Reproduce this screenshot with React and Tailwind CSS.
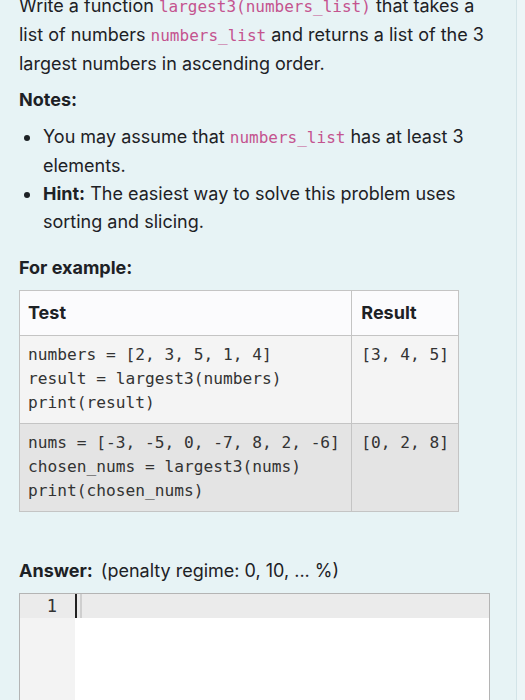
import React from "react";

function Code({ children }) {
  return (
    <code className="font-['DejaVu_Sans_Mono',monospace] text-[16px] text-[#c4548f]">{children}</code>
  );
}

function Bullet({ children }) {
  return (
    <li className="flex">
      <span className="w-[24px] shrink-0 flex justify-start pl-[5px] pt-[12px]">
        <span className="block w-[6px] h-[6px] rounded-full bg-[#1d2125]" />
      </span>
      <span>{children}</span>
    </li>
  );
}

export default function App() {
  const mono = "font-['DejaVu_Sans_Mono',monospace] text-[16.2px] leading-[24px] text-[#333]";
  return (
    <div className="w-[525px] h-[700px] overflow-hidden bg-[#e7f3f5] flex text-[#1d2125] font-['Inter','Liberation_Sans',sans-serif] text-[18px] leading-[28px]">
      <div className="w-[517px] border-r border-[#d3e4e8] pl-[19px] pr-[20px] -mt-2 shrink-0">
        <p>
          Write a function <Code>largest3(numbers_list)</Code> that takes a list of numbers{" "}
          <Code>numbers_list</Code> and returns a list of the 3 largest numbers in ascending order.
        </p>
        <p className="mt-[8px] font-bold">Notes:</p>
        <ul className="mt-[9px]">
          <Bullet>
            You may assume that <Code>numbers_list</Code> has at least 3 elements.
          </Bullet>
          <Bullet>
            <b>Hint:</b> The easiest way to solve this problem uses sorting and slicing.
          </Bullet>
        </ul>
        <p className="mt-[18px] font-bold">For example:</p>
        <table className="mt-[8px] w-[440px] border-collapse border border-[#c4c4c4]">
          <thead>
            <tr className="bg-[#fbfbfd] h-[45px]">
              <th className="text-left font-bold px-[8px] border border-[#c4c4c4] w-[333px]">Test</th>
              <th className="text-left font-bold px-[9px] border border-[#c4c4c4]">Result</th>
            </tr>
          </thead>
          <tbody>
            <tr className="bg-[#f4f4f4] h-[88px]">
              <td className={"align-top px-[8px] pt-[7px] pb-[8px] border border-[#c4c4c4] whitespace-pre " + mono}>
                {"numbers = [2, 3, 5, 1, 4]\nresult = largest3(numbers)\nprint(result)"}
              </td>
              <td className={"align-top px-[9px] pt-[7px] border border-[#c4c4c4] whitespace-pre " + mono}>
                {"[3, 4, 5]"}
              </td>
            </tr>
            <tr className="bg-[#e4e4e4] h-[88px]">
              <td className={"align-top px-[8px] pt-[7px] pb-[8px] border border-[#c4c4c4] whitespace-pre " + mono}>
                {"nums = [-3, -5, 0, -7, 8, 2, -6]\nchosen_nums = largest3(nums)\nprint(chosen_nums)"}
              </td>
              <td className={"align-top px-[9px] pt-[7px] border border-[#c4c4c4] whitespace-pre " + mono}>
                {"[0, 2, 8]"}
              </td>
            </tr>
          </tbody>
        </table>
        <p className="mt-[45px]">
          <b>Answer:</b>
          <span className="ml-[8px]">(penalty regime: 0, 10, ... %)</span>
        </p>
        <div className="mt-[8px] w-[471px] h-[200px] border border-[#b4b4b4] bg-white flex">
          <div className="w-[55px] bg-[#f3f3f3] flex flex-col">
            <div className="h-[24px] bg-[#ebebeb] text-right pr-[18px] font-['DejaVu_Sans_Mono',monospace] text-[17px] leading-[24px] text-[#333]">
              1
            </div>
          </div>
          <div className="flex-1 flex flex-col">
            <div className="h-[24px] bg-[#ebebeb] flex items-stretch">
              <div className="w-[2px] bg-[#222]" />
              <div className="ml-[3px] w-[2px] bg-[#cfcfcf]" />
            </div>
          </div>
        </div>
      </div>
      <div className="flex-1 bg-[#edf5f7]" />
    </div>
  );
}
